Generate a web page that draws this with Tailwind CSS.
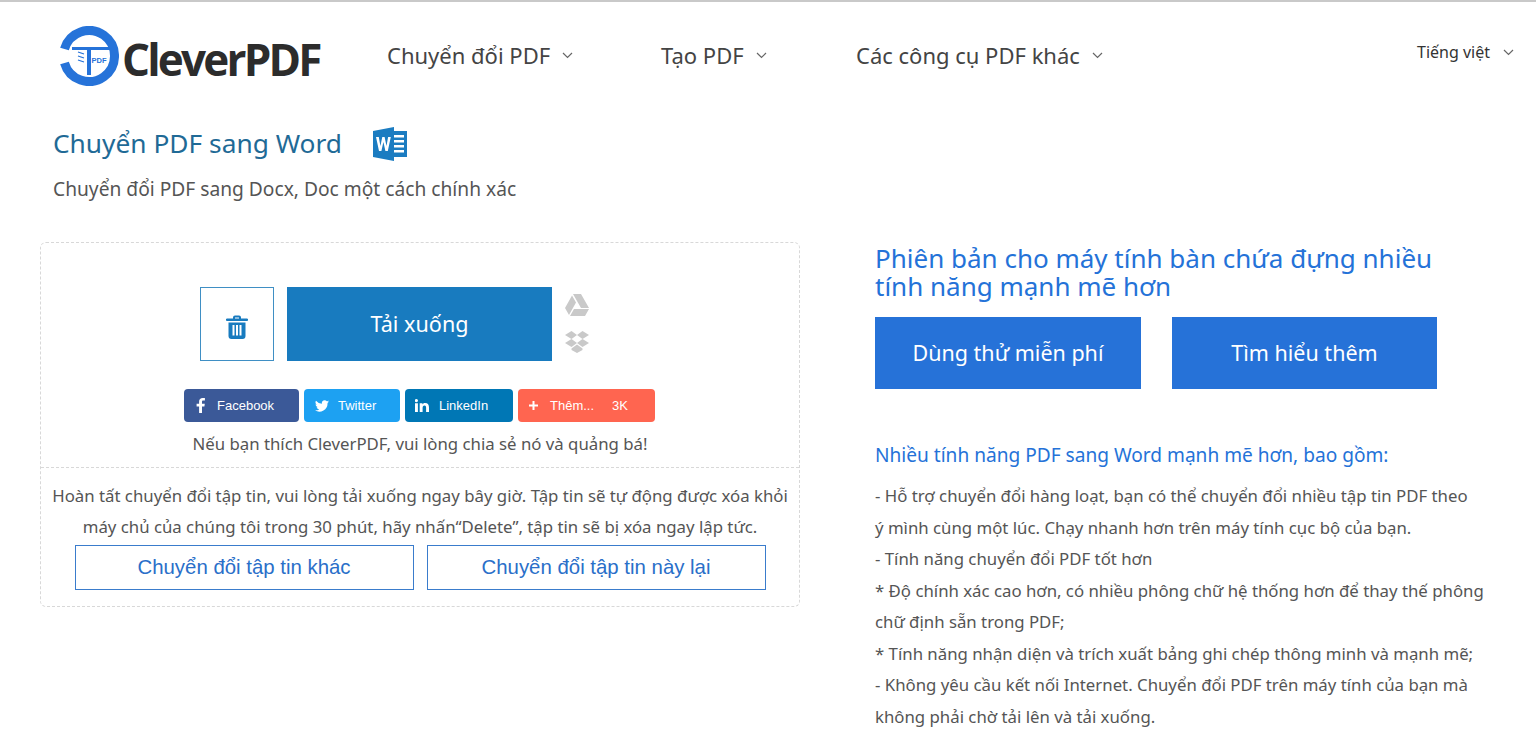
<!DOCTYPE html>
<html lang="vi">
<head>
    <meta charset="UTF-8">
    <title>Chuyển PDF sang Word</title>
    <script src="https://cdn.jsdelivr.net/npm/@tailwindcss/browser@4"></script>
</head>
<body class="bg-white h-[734px] overflow-hidden font-['Noto_Sans',sans-serif] text-[#555]">
    <div class="h-0.5 bg-[#c9c9c9]"></div>

    <!-- Header -->
    <header class="flex items-center h-[104px] pl-[59px] pr-[22px]">
        <a class="flex items-center w-[328px]">
            <svg class="w-[60px] h-[60px] mt-[4px]" viewBox="0 0 60 60">
                <path fill="none" stroke="#2673d9" stroke-width="9" d="M5.500 23A25.500 25.500 0 1 1 5.500 37"/>
                <path fill="#2673d9" d="M13 21h38v3h-19v25h-4v-25h-15z"/>
                <path fill="none" stroke="#2673d9" stroke-width="1.300" d="M19 26l6 2M19 30l6 2M19 34l6 2"/>
                <text x="32.500" y="37" font-size="7.500" font-weight="700" fill="#2673d9" font-family="Liberation Sans">PDF</text>
            </svg>
            <span class="ml-[3px] mt-[9px] text-[44px] leading-none font-bold tracking-[-2.800px] text-[#2c2c2c] font-['Open_Sans',sans-serif]">CleverPDF</span>
        </a>
        <nav class="flex items-center text-[22px] text-[#444] mt-[2px]">
            <a class="flex items-center w-[274px]">Chuyển đổi PDF
                <svg class="ml-[12px] w-[11px] h-[7px]" viewBox="0 0 11 7"><path d="M1 1l4.500 4.500L10 1" fill="none" stroke="#666" stroke-width="1.200"/></svg>
            </a>
            <a class="flex items-center w-[195px]">Tạo PDF
                <svg class="ml-[12px] w-[11px] h-[7px]" viewBox="0 0 11 7"><path d="M1 1l4.500 4.500L10 1" fill="none" stroke="#666" stroke-width="1.200"/></svg>
            </a>
            <a class="flex items-center">Các công cụ PDF khác
                <svg class="ml-[12px] w-[11px] h-[7px]" viewBox="0 0 11 7"><path d="M1 1l4.500 4.500L10 1" fill="none" stroke="#666" stroke-width="1.200"/></svg>
            </a>
        </nav>
        <a class="ml-auto flex items-center text-[16px] text-[#333] -mt-1">Tiếng việt
            <svg class="ml-[13px] w-[11px] h-[7px]" viewBox="0 0 11 7"><path d="M1 1l4.500 4.500L10 1" fill="none" stroke="#666" stroke-width="1.200"/></svg>
        </a>
    </header>

    <!-- Title -->
    <section class="pl-[53px]">
        <div class="flex items-center h-[40px] mt-[18px]">
            <h1 class="text-[26.300px] text-[#1f6a96]">Chuyển PDF sang Word</h1>
            <svg class="ml-[31px] w-[34px] h-[34px]" viewBox="0 0 34 34">
                <rect x="13" y="4" width="21" height="26" fill="#1b7cc1"/>
                <path fill="#fff" d="M20 8h11v2.500h-11zM20 13h11v2.500h-11zM20 18h11v2.500h-11zM20 23h11v2.500h-11z"/>
                <path fill="#1b7cc1" d="M0 4l21-4v34l-21-4z"/>
                <path fill="#fff" d="M3 10h2.800l1.600 9 1.900-9h2.300l1.900 9 1.600-9h2.700l-3 14h-2.400l-2-9-2 9h-2.400z"/>
            </svg>
        </div>
        <p class="text-[19.200px] leading-[28px] mt-[11px]">Chuyển đổi PDF sang Docx, Doc một cách chính xác</p>
    </section>

    <main class="flex items-start pl-[40px] mt-[39px]">
        <!-- Left card -->
        <div class="w-[760px] h-[365px] border border-dashed border-[#d8d8d8] rounded-md">
            <div class="h-[225px] border-b border-dashed border-[#d8d8d8] pt-[44px]">
                <div class="flex pl-[159px]">
                    <button class="flex items-center justify-center w-[74px] h-[74px] border border-[#3f8fc4]">
                        <svg class="w-[22px] h-[24px] mt-[6px]" viewBox="0 0 22 24">
                            <path fill="#187bbf" d="M7 2.500a2 2 0 0 1 2-2h4a2 2 0 0 1 2 2v1h6a1 1 0 0 1 0 2.500h-20a1 1 0 0 1 0-2.500h6zM9 3.500h4v-1h-4z"/>
                            <path fill="#187bbf" fill-rule="evenodd" d="M2.500 7.500h17v13.500a3 3 0 0 1-3 3h-11a3 3 0 0 1-3-3zM6.500 10v10.500h2v-10.500zM10 10v10.500h2v-10.500zM13.500 10v10.500h2v-10.500z"/>
                        </svg>
                    </button>
                    <button class="w-[265px] h-[74px] ml-[13px] bg-[#187bbf] text-white text-[21.600px]">Tải xuống</button>
                    <div class="flex flex-col items-center ml-[13px] pt-[7px] gap-[15px]">
                        <svg class="w-[24px] h-[22px]" viewBox="0 0 24 22">
                            <path fill="#c9c9c9" d="M8 0h8l8 14h-8zM7 1.500l4 7-7 12.500-4-7zM9 15h15l-4 7h-15z"/>
                        </svg>
                        <svg class="w-[24px] h-[22px]" viewBox="0 0 24 22">
                            <path fill="#c9c9c9" d="M6.500 0l5.500 4-5.500 4-6.500-4zM17.500 0l6.500 4-6.500 4-5.500-4zM0 12l6.500-4 5.500 4-5.500 4zM24 12l-6.500-4-5.500 4 5.500 4zM6.500 17.500l5.500-4 5.500 4v1.500l-5.500 3-5.500-3z"/>
                        </svg>
                    </div>
                </div>
                <div class="flex ml-[143px] mt-[28px] gap-[5px] text-white text-[13px] font-['Liberation_Sans',sans-serif]">
                    <a class="flex items-center w-[115px] h-[33px] rounded-sm bg-[#3b5998] pl-[12px]">
                        <svg class="w-[9px] h-[15px]" viewBox="0 0 9 15"><path fill="#fff" d="M6 15v-6.500h2.400l.4-2.800h-2.800v-1.800c0-.8.3-1.300 1.400-1.300h1.500v-2.500a17 17 0 0 0-2.200-.1c-2.200 0-3.600 1.300-3.600 3.700v2h-2.500v2.800h2.500v6.500z"/></svg>
                        <span class="ml-[12px]">Facebook</span>
                    </a>
                    <a class="flex items-center w-[96px] h-[33px] rounded-sm bg-[#1da1f2] pl-[11px]">
                        <svg class="w-[14px] h-[12px]" viewBox="0 0 24 20"><path fill="#fff" d="M24 2.400a10 10 0 0 1-2.800.8 5 5 0 0 0 2.200-2.700 10 10 0 0 1-3.100 1.200 4.900 4.900 0 0 0-8.400 4.500 14 14 0 0 1-10.200-5.200 4.900 4.900 0 0 0 1.500 6.600 5 5 0 0 1-2.200-.6c0 2.400 1.700 4.400 3.900 4.900a5 5 0 0 1-2.200.1 4.900 4.900 0 0 0 4.600 3.400 9.900 9.900 0 0 1-7.300 2 14 14 0 0 0 21.500-12.400 10 10 0 0 0 2.500-2.600z"/></svg>
                        <span class="ml-[9px]">Twitter</span>
                    </a>
                    <a class="flex items-center w-[108px] h-[33px] rounded-sm bg-[#0077b5] pl-[10px]">
                        <svg class="w-[14px] h-[13px]" viewBox="0 0 14 13"><path fill="#fff" d="M0 4.300h2.900v8.700h-2.900zM1.400 0a1.600 1.600 0 1 1 0 3.200 1.600 1.600 0 0 1 0-3.200zM4.700 4.300h2.700v1.200c.5-.8 1.400-1.400 2.700-1.400 2.900 0 3.900 1.800 3.900 4.500v4.400h-2.900v-3.900c0-1.200-.2-2.500-1.600-2.500s-1.900 1.100-1.900 2.400v4h-2.900z"/></svg>
                        <span class="ml-[10px]">LinkedIn</span>
                    </a>
                    <a class="flex items-center w-[137px] h-[33px] rounded-sm bg-[#ff6550] pl-[11px]">
                        <svg class="w-[9px] h-[9px]" viewBox="0 0 9 9"><path fill="#fff" d="M3.500 0h2v3.500h3.500v2h-3.500v3.500h-2v-3.500h-3.500v-2h3.500z"/></svg>
                        <span class="ml-[12px]">Thêm...</span>
                        <span class="ml-[18px]">3K</span>
                    </a>
                </div>
                <p class="text-center text-[16.800px] leading-[24px] mt-[10px]">Nếu bạn thích CleverPDF, vui lòng chia sẻ nó và quảng bá!</p>
            </div>
            <div class="pt-[12px]">
                <p class="text-center text-[16.800px] leading-[31px]">
                    Hoàn tất chuyển đổi tập tin, vui lòng tải xuống ngay bây giờ. Tập tin sẽ tự động được xóa khỏi<br>
                    máy chủ của chúng tôi trong 30 phút, hãy nhấn“Delete”, tập tin sẽ bị xóa ngay lập tức.
                </p>
                <div class="flex justify-center gap-[13px] mt-[3px] font-['Liberation_Sans',sans-serif] text-[20.400px] text-[#2a6fc9]">
                    <a class="flex items-center justify-center w-[339px] h-[45px] border border-[#3a7ccc]">Chuyển đổi tập tin khác</a>
                    <a class="flex items-center justify-center w-[339px] h-[45px] border border-[#3a7ccc]">Chuyển đổi tập tin này lại</a>
                </div>
            </div>
        </div>

        <!-- Right column -->
        <div class="ml-[75px] w-[620px]">
            <h2 class="text-[26px] leading-[28px] text-[#2472d8] mt-[2px]">
                Phiên bản cho máy tính bàn chứa đựng nhiều<br>tính năng mạnh mẽ hơn
            </h2>
            <div class="flex gap-[31px] mt-[17px]">
                <a class="flex items-center justify-center w-[266px] h-[72px] bg-[#2672d8] text-white text-[21.500px]">Dùng thử miễn phí</a>
                <a class="flex items-center justify-center w-[265px] h-[72px] bg-[#2672d8] text-white text-[21.500px]">Tìm hiểu thêm</a>
            </div>
            <h3 class="text-[19.100px] leading-[28px] text-[#2472d8] mt-[52px]">Nhiều tính năng PDF sang Word mạnh mẽ hơn, bao gồm:</h3>
            <div class="text-[16.800px] leading-[31.500px] mt-[11px]">
                <p>- Hỗ trợ chuyển đổi hàng loạt, bạn có thể chuyển đổi nhiều tập tin PDF theo</p>
                <p>ý mình cùng một lúc. Chạy nhanh hơn trên máy tính cục bộ của bạn.</p>
                <p>- Tính năng chuyển đổi PDF tốt hơn</p>
                <p>* Độ chính xác cao hơn, có nhiều phông chữ hệ thống hơn để thay thế phông</p>
                <p>chữ định sẵn trong PDF;</p>
                <p>* Tính năng nhận diện và trích xuất bảng ghi chép thông minh và mạnh mẽ;</p>
                <p>- Không yêu cầu kết nối Internet. Chuyển đổi PDF trên máy tính của bạn mà</p>
                <p>không phải chờ tải lên và tải xuống.</p>
            </div>
        </div>
    </main>
</body>
</html>
